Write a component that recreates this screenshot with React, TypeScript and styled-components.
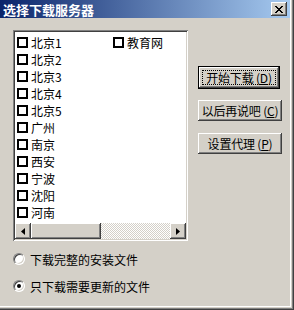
import React from 'react';
import styled, { createGlobalStyle } from 'styled-components';

const GlobalStyle = createGlobalStyle`
    html, body {
        margin: 0;
        padding: 0;
        background: #d4d0c8;
    }
    body {
        font-family: "Noto Sans CJK SC", "Liberation Sans", sans-serif;
        font-size: 12px;
    }
`;

const servers = ['北京1', '北京2', '北京3', '北京4', '北京5', '广州', '南京', '西安', '宁波', '沈阳', '河南', '教育网'];

const raised = `
    box-shadow: inset -1px -1px #404040, inset 1px 1px #ffffff, inset -2px -2px #808080, inset 2px 2px #d4d0c8;
`;

export default function App() {
    return (
        <Window>
            <GlobalStyle />
            <TitleBar>
                <Title>选择下载服务器</Title>
                <CloseButton>
                    <svg width="8" height="7" viewBox="0 0 8 7">
                        <path d="M0 0h2v1h1v1h2v-1h1v-1h2v1h-1v1h-1v1h-1v1h1v1h1v1h1v1h-2v-1h-1v-1h-2v1h-1v1h-2v-1h1v-1h1v-1h1v-1h-1v-1h-1v-1h-1z" fill="#000" />
                    </svg>
                </CloseButton>
            </TitleBar>
            <Body>
                <TopRow>
                    <ListBox>
                        <ListItems>
                            {servers.map((s) => (
                                <Item key={s}>
                                    <CheckBox />
                                    <span>{s}</span>
                                </Item>
                            ))}
                        </ListItems>
                        <ScrollBar>
                            <ArrowButton>
                                <svg width="4" height="7" viewBox="0 0 4 7"><path d="M4 0v7L0 3.5z" fill="#000" /></svg>
                            </ArrowButton>
                            <Thumb />
                            <Track />
                            <ArrowButton>
                                <svg width="4" height="7" viewBox="0 0 4 7"><path d="M0 0v7l4-3.5z" fill="#000" /></svg>
                            </ArrowButton>
                        </ScrollBar>
                    </ListBox>
                    <ButtonColumn>
                        <DefaultFrame>
                            <Button $focused>开始下载 (<u>D</u>)</Button>
                        </DefaultFrame>
                        <Button>以后再说吧 (<u>C</u>)</Button>
                        <Button>设置代理 (<u>P</u>)</Button>
                    </ButtonColumn>
                </TopRow>
                <Options>
                    <Option>
                        <Radio />
                        <span>下载完整的安装文件</span>
                    </Option>
                    <Option>
                        <Radio $checked />
                        <span>只下载需要更新的文件</span>
                    </Option>
                </Options>
            </Body>
        </Window>
    );
}

const Window = styled.div`
    width: 294px;
    height: 310px;
    box-sizing: border-box;
    background: #d4d0c8;
    border-right: 1px solid #404040;
    border-bottom: 1px solid #404040;
    box-shadow: inset -1px -1px #808080, inset -2px -2px #d4d0c8, inset -3px -3px #ffffff;
    padding-right: 3px;
    display: flex;
    flex-direction: column;
`;

const TitleBar = styled.div`
    height: 18px;
    background: linear-gradient(to right, #0a246a, #a6caf0);
    display: flex;
    align-items: center;
    justify-content: space-between;
    padding: 0 3px 0 3px;
`;

const Title = styled.div`
    color: #fff;
    font-weight: bold;
    font-size: 13px;
`;

const CloseButton = styled.div`
    width: 16px;
    height: 14px;
    background: #d4d0c8;
    ${raised}
    display: flex;
    align-items: center;
    justify-content: center;
`;

const Body = styled.div`
    padding: 12px 0 0 13px;
    display: flex;
    flex-direction: column;
`;

const TopRow = styled.div`
    display: flex;
`;

const ListBox = styled.div`
    width: 175px;
    height: 211px;
    box-sizing: border-box;
    padding: 2px;
    background: #fff;
    box-shadow: inset 1px 1px #808080, inset -1px -1px #ffffff, inset 2px 2px #404040, inset -2px -2px #d4d0c8;
    display: flex;
    flex-direction: column;
`;

const ListItems = styled.div`
    flex: 1;
    display: grid;
    grid-template-rows: repeat(11, 17px);
    grid-auto-flow: column;
    grid-auto-columns: 96px;
    padding: 2px 0 0 2px;
    overflow: hidden;
`;

const Item = styled.div`
    display: flex;
    align-items: center;
    gap: 3px;
    color: #000;
    white-space: nowrap;
`;

const CheckBox = styled.div`
    width: 11px;
    height: 11px;
    box-sizing: border-box;
    border: 2px solid #000;
    background: #fff;
`;

const ScrollBar = styled.div`
    height: 16px;
    display: flex;
`;

const ArrowButton = styled.div`
    width: 16px;
    height: 16px;
    background: #d4d0c8;
    ${raised}
    display: flex;
    align-items: center;
    justify-content: center;
`;

const Thumb = styled.div`
    width: 70px;
    height: 16px;
    background: #d4d0c8;
    ${raised}
`;

const Track = styled.div`
    flex: 1;
    background: repeating-conic-gradient(#ffffff 0 25%, #d4d0c8 0 50%) 0 0 / 2px 2px;
`;

const ButtonColumn = styled.div`
    display: flex;
    flex-direction: column;
    align-items: flex-start;
    gap: 12px;
    padding: 36px 0 0 10px;
`;

const DefaultFrame = styled.div`
    border: 1px solid #000;
    margin-bottom: -1px;
    & > div {
        width: 80px;
    }
`;

const Button = styled.div<{ $focused?: boolean }>`
    width: 84px;
    height: 21px;
    box-sizing: border-box;
    background: #d4d0c8;
    ${raised}
    display: flex;
    align-items: center;
    justify-content: center;
    color: #000;
    white-space: pre;
    letter-spacing: -0.2px;
    position: relative;
    u {
        text-decoration: underline;
    }
    ${(p) => p.$focused && `
        &::after {
            content: '';
            position: absolute;
            inset: 3px;
            border: 1px dotted #000;
        }
    `}
`;

const Options = styled.div`
    display: flex;
    flex-direction: column;
    gap: 15px;
    padding: 12px 0 0 0;
`;

const Option = styled.div`
    display: flex;
    align-items: center;
    gap: 5px;
    color: #000;
    height: 12px;
`;

const Radio = styled.div<{ $checked?: boolean }>`
    width: 12px;
    height: 12px;
    box-sizing: border-box;
    border-radius: 50%;
    background: #fff;
    border: 1px solid;
    border-color: #808080 #ffffff #ffffff #808080;
    box-shadow: inset 1px 1px #404040, inset -1px -1px #d4d0c8;
    display: flex;
    align-items: center;
    justify-content: center;
    &::after {
        content: '';
        width: 4px;
        height: 4px;
        border-radius: 50%;
        background: ${(p) => (p.$checked ? '#000' : 'transparent')};
    }
`;
